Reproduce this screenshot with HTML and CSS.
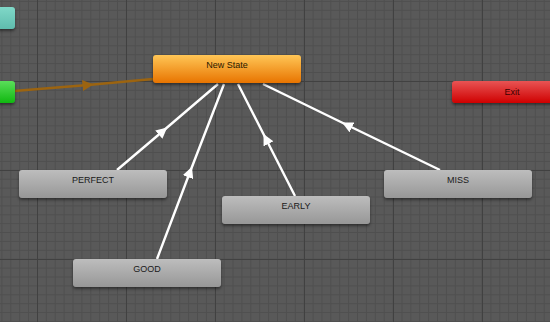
FILE: index.html
```html
<!DOCTYPE html>
<html lang="en">
<head>
    <meta charset="UTF-8">
    <meta name="viewport" content="width=device-width, initial-scale=1.0">
    <title>Animator</title>
    <link rel="stylesheet" href="styles.css">
</head>
<body>
    <!-- Animator graph -->
    <div class="graph">
        <svg class="edges" width="550" height="322" viewBox="0 0 550 322">
            <defs>
                <marker id="arrowWhite" viewBox="0 0 10 10" refX="5" refY="5" markerWidth="11" markerHeight="11" markerUnits="userSpaceOnUse" orient="auto">
                    <path d="M0 0 L10 5 L0 10 z" fill="#ffffff"/>
                </marker>
                <marker id="arrowOrange" viewBox="0 0 10 10" refX="5" refY="5" markerWidth="11" markerHeight="11" markerUnits="userSpaceOnUse" orient="auto">
                    <path d="M0 0 L10 5 L0 10 z" fill="#9c6410"/>
                </marker>
            </defs>
            <path class="edge entry" d="M14 91 L88 85 L153 79"/>
            <path class="edge" d="M117 170 L163 131 L218 84"/>
            <path class="edge" d="M157 259 L190 172 L224 84"/>
            <path class="edge" d="M295 196 L266 139 L238 84"/>
            <path class="edge" d="M440 170 L347 125 L263 84"/>
        </svg>

        <div class="node any"></div>
        <div class="node entry-node"></div>
        <div class="node default state-new">New State</div>
        <div class="node exit">Exit</div>
        <div class="node state state-perfect">PERFECT</div>
        <div class="node state state-good">GOOD</div>
        <div class="node state state-early">EARLY</div>
        <div class="node state state-miss">MISS</div>
    </div>
</body>
</html>
```

FILE: styles.css
```css
* {
    margin: 0;
    padding: 0;
    box-sizing: border-box;
}

body {
    font-family: 'Liberation Sans', Arial, sans-serif;
    background: #585858;
    overflow: hidden;
}

/* grid: major lines every 89px, minor every 8.9px */
.graph {
    position: relative;
    width: 550px;
    height: 322px;
    overflow: hidden;
    background-color: #595959;
    background-image:
        linear-gradient(to right, #414141 0 1px, transparent 1px),
        linear-gradient(to bottom, #414141 0 1px, transparent 1px),
        linear-gradient(to right, #4f4f4f 0 1px, transparent 1px),
        linear-gradient(to bottom, #4f4f4f 0 1px, transparent 1px);
    background-size: 89px 100%, 100% 89px, 8.9px 100%, 100% 8.9px;
    background-position: 37px 0, 0 81px, 1.4px 0, 0 0.9px;
}

.edges {
    position: absolute;
    top: 0;
    left: 0;
}

.edge {
    fill: none;
    stroke: #ffffff;
    stroke-width: 2.4;
    marker-mid: url(#arrowWhite);
}

.edge.entry {
    stroke: #9c6410;
    marker-mid: url(#arrowOrange);
}

.node {
    position: absolute;
    width: 148px;
    height: 28px;
    border-radius: 3px;
    padding-top: 5px;
    font-size: 9px;
    line-height: 10px;
    text-align: center;
    color: #1a1a1a;
    box-shadow: 0 2px 3px rgba(0, 0, 0, 0.45);
}

.state {
    background: linear-gradient(#bdbdbd, #979797);
}

.default {
    background: linear-gradient(#ffc656, #e87400);
    color: #2a1a00;
}

.state-new { left: 153px; top: 55px; }
.state-perfect { left: 19px; top: 170px; }
.state-good { left: 73px; top: 259px; }
.state-early { left: 222px; top: 196px; }
.state-miss { left: 384px; top: 170px; }

.any,
.entry-node,
.exit {
    height: 22px;
    padding-top: 6px;
}

.any {
    left: -133px;
    top: 7px;
    background: linear-gradient(#80d8c8, #5fbcad);
}

.entry-node {
    left: -133px;
    top: 81px;
    background: linear-gradient(#5ade5a, #10b810);
}

.exit {
    left: 452px;
    top: 81px;
    width: 120px;
    background: linear-gradient(#e85454, #cf0000);
    color: #3a0000;
}
```
